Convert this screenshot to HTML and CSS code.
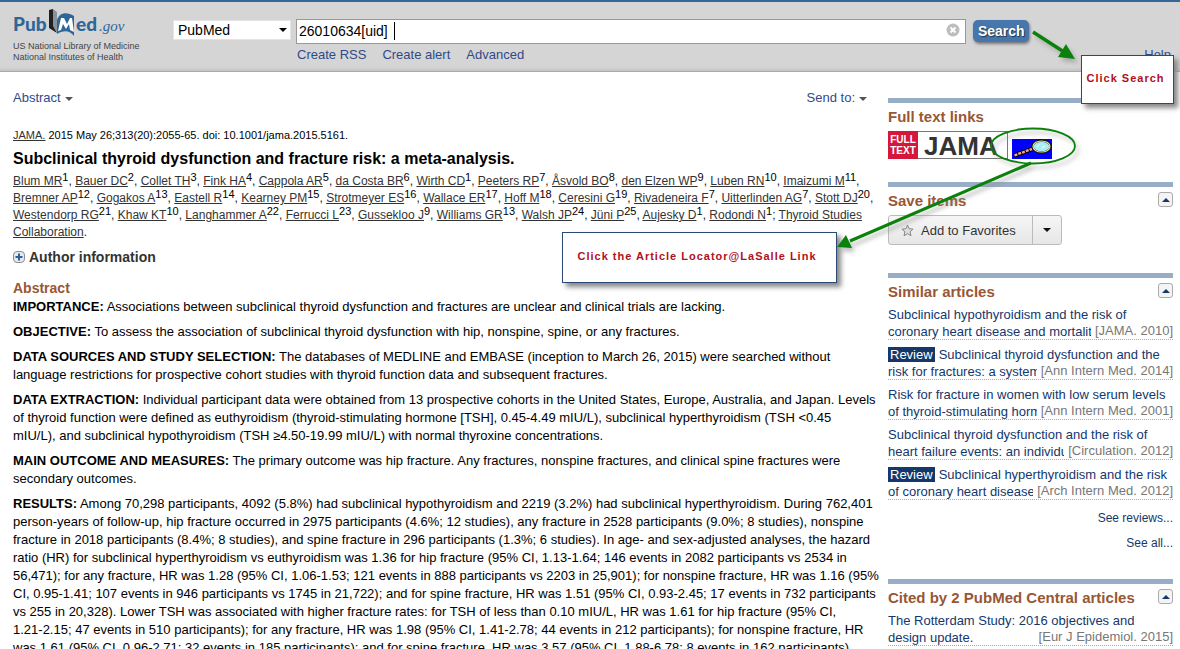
FILE: index.html
```html
<!DOCTYPE html>
<html lang="en">
<head>
<meta charset="utf-8">
<title>Subclinical thyroid dysfunction and fracture risk - PubMed</title>
<link rel="stylesheet" href="styles.css">
</head>
<body>
<header class="header">
  <div class="brand">
    <a href="#" aria-label="PubMed.gov">
      <svg class="logo" width="114" height="32" viewBox="0 0 114 32">
        <path d="M36 2 L40 1 V17 L44 25 L36 20z" fill="#1d2024"/>
        <path d="M40 1 L44 4 V25 L40 18z" fill="#8b9198"/>
        <path d="M44 12 C47 4 54 4 61 8 V28 C57 22 50 22 44 26z" fill="#2f6698"/>
        <text class="logo-word" x="0" y="23">Pub</text>
        <path d="M45 23 L48 10 L51 10 L54 16 L57 10 H59 L61 24 L57 22 L56 16 L53 21 L50 16 L48 22z" fill="#fff"/>
        <text class="logo-word" x="63" y="23">ed</text>
        <text class="logo-gov" x="86" y="23">.gov</text>
      </svg>
    </a>
    <p class="agency">US National Library of Medicine<br>National Institutes of Health</p>
  </div>
  <form class="search">
    <div class="select-wrap">
      <select class="db" aria-label="Database"><option>PubMed</option></select>
    </div>
    <div class="term">
      <div class="field">
        <input class="term-input" type="text" aria-label="Search term" value="26010634[uid]">
        <span class="caret"></span>
        <button class="clear" type="button" aria-label="Clear">
          <svg width="14" height="14" viewBox="0 0 14 14"><circle cx="7" cy="7" r="6.500" fill="#bdbdbd"/><path d="M4.500 4.500l5 5M9.500 4.500l-5 5" stroke="#fff" stroke-width="2"/></svg>
        </button>
      </div>
      <nav class="term-links"><a href="#">Create RSS</a><a href="#">Create alert</a><a href="#">Advanced</a></nav>
    </div>
    <button class="go" type="button">Search</button>
  </form>
  <a class="help" href="#">Help</a>
</header>

<div class="page">
  <main class="main">
    <div class="tools"><a class="menu" href="#">Abstract</a><a class="menu" href="#">Send to:</a></div>
    <p class="cite"><a href="#">JAMA.</a> 2015 May 26;313(20):2055-65. doi: 10.1001/jama.2015.5161.</p>
    <h1 class="title">Subclinical thyroid dysfunction and fracture risk: a meta-analysis.</h1>
    <p class="authors"><a href="#">Blum MR</a><sup>1</sup>, <a href="#">Bauer DC</a><sup>2</sup>, <a href="#">Collet TH</a><sup>3</sup>, <a href="#">Fink HA</a><sup>4</sup>, <a href="#">Cappola AR</a><sup>5</sup>, <a href="#">da Costa BR</a><sup>6</sup>, <a href="#">Wirth CD</a><sup>1</sup>, <a href="#">Peeters RP</a><sup>7</sup>, <a href="#">Åsvold BO</a><sup>8</sup>, <a href="#">den Elzen WP</a><sup>9</sup>, <a href="#">Luben RN</a><sup>10</sup>, <a href="#">Imaizumi M</a><sup>11</sup>,<br>
    <a href="#">Bremner AP</a><sup>12</sup>, <a href="#">Gogakos A</a><sup>13</sup>, <a href="#">Eastell R</a><sup>14</sup>, <a href="#">Kearney PM</a><sup>15</sup>, <a href="#">Strotmeyer ES</a><sup>16</sup>, <a href="#">Wallace ER</a><sup>17</sup>, <a href="#">Hoff M</a><sup>18</sup>, <a href="#">Ceresini G</a><sup>19</sup>, <a href="#">Rivadeneira F</a><sup>7</sup>, <a href="#">Uitterlinden AG</a><sup>7</sup>, <a href="#">Stott DJ</a><sup>20</sup>,<br>
    <a href="#">Westendorp RG</a><sup>21</sup>, <a href="#">Khaw KT</a><sup>10</sup>, <a href="#">Langhammer A</a><sup>22</sup>, <a href="#">Ferrucci L</a><sup>23</sup>, <a href="#">Gussekloo J</a><sup>9</sup>, <a href="#">Williams GR</a><sup>13</sup>, <a href="#">Walsh JP</a><sup>24</sup>, <a href="#">Jüni P</a><sup>25</sup>, <a href="#">Aujesky D</a><sup>1</sup>, <a href="#">Rodondi N</a><sup>1</sup>; <a href="#">Thyroid Studies<br>Collaboration</a>.</p>
    <h3 class="author-info">
      <svg width="12" height="12" viewBox="0 0 12 12"><rect x=".5" y=".5" width="11" height="11" rx="3.500" fill="#e4eaf0" stroke="#8c8c8c"/><path d="M6 2.500v7M2.500 6h7" stroke="#2f5f95" stroke-width="2"/></svg>
      Author information</h3>
    <h3 class="heading">Abstract</h3>
    <div class="abstract">
      <p><b>IMPORTANCE:</b> Associations between subclinical thyroid dysfunction and fractures are unclear and clinical trials are lacking.</p>
      <p><b>OBJECTIVE:</b> To assess the association of subclinical thyroid dysfunction with hip, nonspine, spine, or any fractures.</p>
      <p><b>DATA SOURCES AND STUDY SELECTION:</b> The databases of MEDLINE and EMBASE (inception to March 26, 2015) were searched without<br>language restrictions for prospective cohort studies with thyroid function data and subsequent fractures.</p>
      <p><b>DATA EXTRACTION:</b> Individual participant data were obtained from 13 prospective cohorts in the United States, Europe, Australia, and Japan. Levels<br>of thyroid function were defined as euthyroidism (thyroid-stimulating hormone [TSH], 0.45-4.49 mIU/L), subclinical hyperthyroidism (TSH &lt;0.45<br>mIU/L), and subclinical hypothyroidism (TSH ≥4.50-19.99 mIU/L) with normal thyroxine concentrations.</p>
      <p><b>MAIN OUTCOME AND MEASURES:</b> The primary outcome was hip fracture. Any fractures, nonspine fractures, and clinical spine fractures were<br>secondary outcomes.</p>
      <p><b>RESULTS:</b> Among 70,298 participants, 4092 (5.8%) had subclinical hypothyroidism and 2219 (3.2%) had subclinical hyperthyroidism. During 762,401<br>person-years of follow-up, hip fracture occurred in 2975 participants (4.6%; 12 studies), any fracture in 2528 participants (9.0%; 8 studies), nonspine<br>fracture in 2018 participants (8.4%; 8 studies), and spine fracture in 296 participants (1.3%; 6 studies). In age- and sex-adjusted analyses, the hazard<br>ratio (HR) for subclinical hyperthyroidism vs euthyroidism was 1.36 for hip fracture (95% CI, 1.13-1.64; 146 events in 2082 participants vs 2534 in<br>56,471); for any fracture, HR was 1.28 (95% CI, 1.06-1.53; 121 events in 888 participants vs 2203 in 25,901); for nonspine fracture, HR was 1.16 (95%<br>CI, 0.95-1.41; 107 events in 946 participants vs 1745 in 21,722); and for spine fracture, HR was 1.51 (95% CI, 0.93-2.45; 17 events in 732 participants<br>vs 255 in 20,328). Lower TSH was associated with higher fracture rates: for TSH of less than 0.10 mIU/L, HR was 1.61 for hip fracture (95% CI,<br>1.21-2.15; 47 events in 510 participants); for any fracture, HR was 1.98 (95% CI, 1.41-2.78; 44 events in 212 participants); for nonspine fracture, HR<br>was 1.61 (95% CI, 0.96-2.71; 32 events in 185 participants); and for spine fracture, HR was 3.57 (95% CI, 1.88-6.78; 8 events in 162 participants).</p>
    </div>
  </main>

  <aside class="side">
    <section class="portlet fulltext">
      <h3 class="heading">Full text links</h3>
      <div class="providers">
        <a href="#" aria-label="Full text at JAMA">
          <svg width="120" height="28" viewBox="0 0 120 28">
            <rect x=".5" y=".5" width="119" height="27" fill="#fff" stroke="#777"/>
            <rect width="30" height="28" fill="#d5173b"/>
            <text class="ft" x="15" y="12">FULL</text>
            <text class="ft" x="15" y="23">TEXT</text>
            <text class="jama" x="36" y="24">JAMA</text>
          </svg>
        </a>
        <a href="#" aria-label="Article Locator">
          <svg width="40" height="20" viewBox="0 0 40 20">
            <rect width="40" height="20" fill="#00f"/>
            <path d="M2 16.500L20 10" stroke="#000" stroke-width="4.500"/>
            <path d="M2.500 16.300L20 10" stroke="#f0a890" stroke-width="2.400" stroke-dasharray="3 1"/>
            <ellipse cx="29.500" cy="7.500" rx="9" ry="6" fill="#a9eef2" stroke="#111" stroke-width="2.400"/>
            <ellipse cx="29.500" cy="7.500" rx="8.500" ry="5.500" fill="none" stroke="#f3e0a0" stroke-width="1.200"/>
            <path d="M25 8l3-3M30 9l3-2" stroke="#fff"/>
          </svg>
        </a>
      </div>
    </section>
    <section class="portlet save">
      <div class="bar"><h3 class="heading">Save items</h3><button class="toggle" aria-label="Collapse Save items"></button></div>
      <div class="fav">
        <button class="fav-main"><svg width="13" height="13" viewBox="0 0 13 13"><path d="M6.500 1l1.600 3.700 4 .4-3 2.700.9 4-3.500-2.100L3 11.800l.9-4-3-2.700 4-.4z" fill="#ddd" stroke="#888"/></svg>Add to Favorites</button>
        <button class="fav-more" aria-label="More"></button>
      </div>
    </section>
    <section class="portlet similar">
      <div class="bar"><h3 class="heading">Similar articles</h3><button class="toggle" aria-label="Collapse Similar articles"></button></div>
      <ul class="list">
        <li><a href="#">Subclinical hypothyroidism and the risk of</a><div class="row"><a href="#">coronary heart disease and mortalit</a><span class="src">[JAMA. 2010]</span></div></li>
        <li><a href="#"><span class="tag">Review</span>Subclinical thyroid dysfunction and the</a><div class="row"><a href="#">risk for fractures: a system</a><span class="src">[Ann Intern Med. 2014]</span></div></li>
        <li><a href="#">Risk for fracture in women with low serum levels</a><div class="row"><a href="#">of thyroid-stimulating horm</a><span class="src">[Ann Intern Med. 2001]</span></div></li>
        <li><a href="#">Subclinical thyroid dysfunction and the risk of</a><div class="row"><a href="#">heart failure events: an individu</a><span class="src">[Circulation. 2012]</span></div></li>
        <li><a href="#"><span class="tag">Review</span>Subclinical hyperthyroidism and the risk</a><div class="row"><a href="#">of coronary heart disease</a><span class="src">[Arch Intern Med. 2012]</span></div></li>
      </ul>
      <div class="more"><a href="#">See reviews...</a><a href="#">See all...</a></div>
    </section>
    <section class="portlet">
      <div class="bar"><h3 class="heading">Cited by 2 PubMed Central articles</h3><button class="toggle" aria-label="Collapse Cited by"></button></div>
      <ul class="list">
        <li><a href="#">The Rotterdam Study: 2016 objectives and</a><div class="row"><a href="#">design update.</a><span class="src">[Eur J Epidemiol. 2015]</span></div></li>
      </ul>
    </section>
  </aside>
</div>

<div class="callout callout-search">Click Search</div>
<div class="callout callout-locator">Click the Article Locator@LaSalle Link</div>
<svg class="arrows" width="350" height="260" viewBox="830 0 350 260">
  <g fill="none" stroke="#0b810b">
    <path d="M1033 32L1064 52" stroke-width="3.500"/>
    <path d="M1031 163L850 241" stroke-width="3"/>
    <ellipse cx="1033" cy="146" rx="42" ry="17.500" stroke-width="1.800"/>
  </g>
  <path d="M1075 59L1058 57L1066 44z" fill="#0b810b"/>
  <path d="M837 247L846 235L852 248z" fill="#0b810b"/>
</svg>
</body>
</html>
```
FILE: styles.css
```css
* { box-sizing: border-box; }
body {
  margin: 0;
  position: relative;
  height: 100vh;
  overflow: hidden;
  background: #fff;
  color: #000;
  font: 12px/18px "Liberation Sans", Arial, sans-serif;
}
h1, h3, p, ul { margin: 0; padding: 0; }
a { color: #2f4a8b; text-decoration: none; }
svg { display: block; }
button { margin: 0; padding: 0; font-family: inherit; cursor: pointer; }

.header {
  display: flex;
  height: 72px;
  padding: 6px 9px 0 13px;
  border-top: 2px solid #369;
  border-bottom: 1px solid #aaa;
  background: linear-gradient(#d5d5d5 94%, #c4c4c4);
}
.brand { width: 160px; }
.logo-word { font: 900 19px Lato, sans-serif; fill: #2f6698; }
.logo-gov { font: italic 15px "Liberation Serif", serif; fill: #2f6698; }
.agency { margin-top: 1px; font-size: 9px; line-height: 11px; color: #444; white-space: nowrap; }
.search { display: flex; flex: 1; align-items: flex-start; padding-top: 11px; }
.select-wrap { position: relative; width: 118px; margin: 1px 5px 0 0; }
.db {
  display: block;
  width: 100%;
  height: 20px;
  padding: 0 4px;
  border: 1px solid #e4e4e4;
  border-radius: 0;
  appearance: none;
  background: #fff;
  color: #000;
  font: 14px/18px "Liberation Sans", Arial, sans-serif;
}
.select-wrap::after {
  content: "";
  position: absolute;
  right: 4px;
  top: 8px;
  border: 4px solid transparent;
  border-top-color: #000;
  border-bottom: 0;
}
.term { flex: 1; margin-right: 7px; }
.field { position: relative; }
.term-input {
  display: block;
  width: 100%;
  height: 25px;
  padding: 0 30px 2px 2px;
  border: 1px solid #999;
  background: #fff;
  color: #000;
  font: 14px "Liberation Sans", Arial, sans-serif;
}
.caret { position: absolute; left: 98px; top: 3px; width: 1px; height: 18px; background: #000; }
.clear { position: absolute; right: 6px; top: 4px; border: 0; background: none; }
.term-links { display: flex; gap: 16px; padding: 2px 1px; font-size: 13px; }
.go {
  width: 56px;
  height: 22px;
  margin-top: 1px;
  border: 0;
  border-radius: 5px;
  background: #4676ab;
  box-shadow: 1px 2px 3px #777;
  color: #fff;
  font-size: 14px;
  font-weight: bold;
  text-shadow: 1px 1px 1px #234;
}
.help { margin-left: 115px; padding-top: 38px; font-size: 13px; }

.page { display: grid; grid-template-columns: minmax(0, 1fr) 285px; gap: 8px; padding: 17px 7px 0 13px; }
.tools { display: flex; justify-content: space-between; padding-right: 13px; font-size: 13px; }
.menu::after {
  content: "";
  display: inline-block;
  margin-left: 4px;
  vertical-align: 1px;
  border: 4px solid transparent;
  border-top-color: #555;
  border-bottom: 0;
}
.cite { margin-top: 19px; font-size: 11px; }
.cite a, .authors a { color: #333; text-decoration: underline; }
.title { margin-top: 5px; font-size: 16px; line-height: 20px; }
.authors { margin-top: 4px; line-height: 17px; color: #222; white-space: nowrap; }
.authors sup { font-size: 11px; line-height: 0; vertical-align: 4px; color: #000; }
.author-info { display: flex; align-items: center; gap: 4px; margin-top: 7px; font-size: 14px; color: #333; }
.heading { font-size: 14px; color: #985735; }
.author-info + .heading { margin-top: 13px; }
.abstract { display: grid; gap: 7px; margin-top: 1px; font-size: 13px; white-space: nowrap; }

.side { padding-top: 9px; font-size: 13px; line-height: 17px; }
.portlet { border-top: 5px solid #98aec6; }
.portlet .heading { font-size: 15px; line-height: 18px; }
.fulltext { height: 84px; padding-top: 5px; }
.providers { display: flex; align-items: flex-end; gap: 4px; margin-top: 5px; }
.ft { font: bold 10px "Liberation Sans", Arial, sans-serif; fill: #fff; text-anchor: middle; }
.jama { font: bold 26px "Liberation Sans", Arial, sans-serif; fill: #333; }
.bar { display: flex; justify-content: space-between; padding-top: 5px; }
.toggle { display: grid; place-items: center; width: 15px; height: 15px; border: 1px solid #aaa; border-radius: 3px; background: #f4f4f4; }
.toggle::before { content: ""; border: 4px solid transparent; border-bottom-color: #14376c; border-top: 0; }
.save { height: 91px; }
.fav { display: flex; width: 174px; height: 30px; margin-top: 5px; border: 1px solid #bbb; border-radius: 3px; background: linear-gradient(#f6f6f6, #e6e6e6); }
.fav-main { display: flex; flex: 1; align-items: center; gap: 7px; padding-left: 12px; border: 0; background: none; color: #333; font-size: 13px; }
.fav-more { display: grid; place-items: center; width: 29px; border: 0; border-left: 1px solid #bbb; background: none; }
.fav-more::before { content: ""; border: 4px solid transparent; border-top-color: #111; border-bottom: 0; }
.similar { height: 306px; }
.list { margin-top: 5px; list-style: none; }
.list li { height: 34px; margin-bottom: 6px; border-bottom: 1px dotted #aaa; white-space: nowrap; }
.list a, .more a { color: #14376c; }
.row { display: flex; }
.row a { flex: 1; overflow: hidden; }
.src { padding-left: 4px; line-height: 15px; color: #777; }
.tag { margin-right: 4px; padding: 0 2px; background: #14376c; color: #fff; }
.more { display: grid; gap: 8px; justify-items: end; padding-top: 4px; font-size: 12px; }

.callout {
  position: absolute;
  display: grid;
  place-items: center;
  border: 1px solid #2a4a74;
  background: #fff;
  box-shadow: 4px 4px 5px #888;
  color: #b0101c;
  font-size: 11px;
  font-weight: bold;
  letter-spacing: 1px;
  white-space: nowrap;
}
.callout-search { right: 6px; top: 55px; width: 93px; height: 49px; padding-right: 4px; padding-bottom: 4px; }
.callout-locator { right: 343px; top: 232px; width: 275px; height: 51px; padding-right: 5px; padding-bottom: 4px; }
.arrows { position: absolute; top: 0; right: 0; pointer-events: none; filter: drop-shadow(3px 4px 2px #8888); }
```
